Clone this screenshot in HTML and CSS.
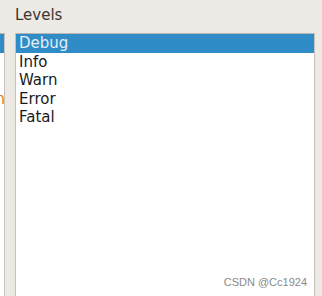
FILE: index.html
```html
<!DOCTYPE html>
<html>
<head>
<meta charset="utf-8">
<link rel="stylesheet" href="styles.css">
</head>
<body>
<div class="app">
  <div class="side">
    <div class="side-list">
      <div class="side-row sel"></div>
      <div class="side-row"></div>
      <div class="side-row"></div>
      <div class="side-row orange">n</div>
    </div>
  </div>
  <div class="panel">
    <div class="title">Levels</div>
    <div class="list">
      <div class="row sel">Debug</div>
      <div class="row">Info</div>
      <div class="row">Warn</div>
      <div class="row">Error</div>
      <div class="row">Fatal</div>
      <div class="mark">CSDN @Cc1924</div>
    </div>
  </div>
</div>
</body>
</html>
```

FILE: styles.css
```css
html, body {
  margin: 0;
  padding: 0;
  background: #edeae6;
}
body {
  width: 322px;
  height: 296px;
  overflow: hidden;
  font-family: "DejaVu Sans", "Open Sans", sans-serif;
}
.app {
  display: flex;
  height: 296px;
}
.side {
  width: 5px;
  padding-top: 33px;
  box-sizing: border-box;
  display: flex;
  flex-direction: column;
}
.side-list {
  flex: 1;
  background: #fff;
  border-top: 1px solid #b9b6b1;
  border-right: 1px solid #c6c3be;
  overflow: hidden;
  display: flex;
  flex-direction: column;
  align-items: flex-end;
}
.side-row {
  width: 20px;
  height: 18.5px;
  font-size: 15px;
  line-height: 18.5px;
  text-align: right;
  flex: none;
}
.side-row.sel {
  background: #308cc6;
}
.side-row.orange {
  color: #e07a1a;
  margin-right: -1px;
}
.panel {
  margin-left: 10px;
  width: 300px;
  display: flex;
  flex-direction: column;
}
.title {
  height: 33px;
  box-sizing: border-box;
  padding-top: 6px;
  font-size: 15px;
  line-height: 18px;
  color: #3b3631;
}
.list {
  flex: 1;
  position: relative;
  background: #fff;
  border: 1px solid #c6c3be;
  border-top-color: #b9b6b1;
  border-bottom: none;
}
.row {
  height: 18.5px;
  line-height: 18.5px;
  font-size: 15px;
  padding-left: 3px;
  color: #1a1a1a;
}
.row.sel {
  background: #308cc6;
  color: #e3eef8;
}
.mark {
  position: absolute;
  right: 7px;
  bottom: 8px;
  font-size: 11px;
  color: #8a8a8a;
  font-family: "Liberation Sans", Arial, sans-serif;
}
```
